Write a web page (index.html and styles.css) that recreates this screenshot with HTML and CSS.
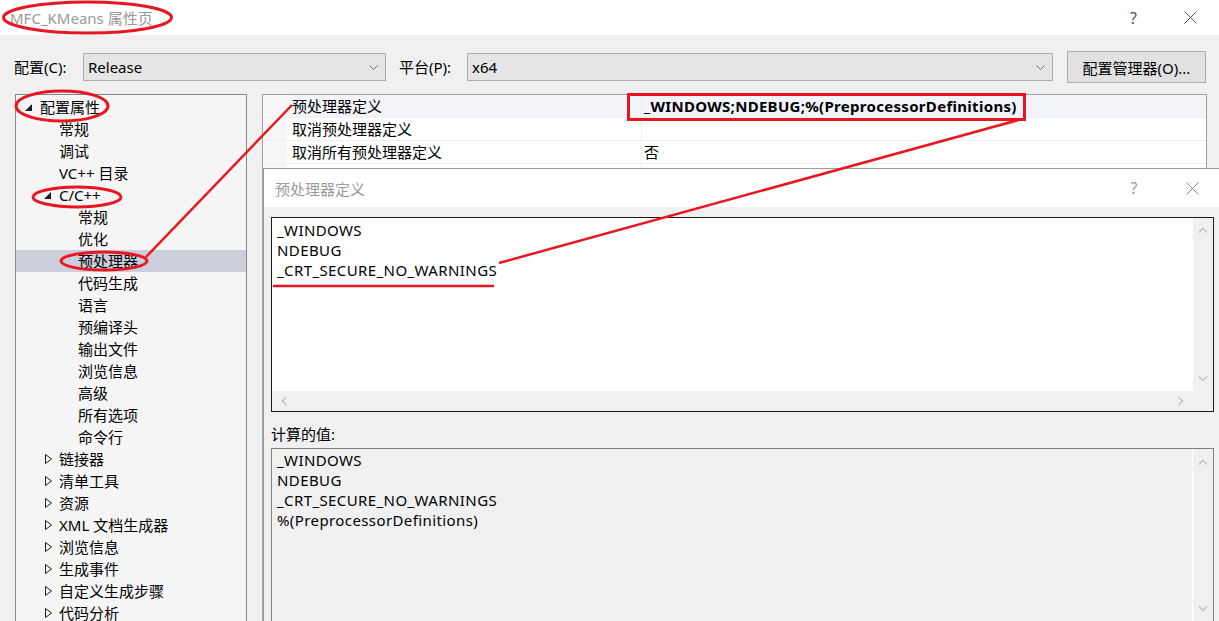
FILE: index.html
```html
<!DOCTYPE html>
<html lang="zh-CN">
<head>
    <meta charset="UTF-8">
    <meta name="viewport" content="width=device-width, initial-scale=1.0">
    <title>MFC_KMeans 属性页</title>
    <link rel="stylesheet" href="styles.css">
</head>
<body>

<div class="window">

    <div class="titlebar">
        <span class="title">MFC_KMeans 属性页</span>
        <span class="caption-btn help">?</span>
        <span class="caption-btn">
            <svg width="13" height="13" viewBox="0 0 13 13"><path d="M0.5 0.5 L12.5 12.5 M12.5 0.5 L0.5 12.5" stroke="#555" stroke-width="1" fill="none"/></svg>
        </span>
    </div>

    <div class="toolbar">
        <span class="field-label label-config">配置(C):</span>
        <div class="combo combo-config">
            <span>Release</span>
            <svg width="9" height="5" viewBox="0 0 9 5"><path d="M0.5 0.5 L4.5 4.5 L8.5 0.5" stroke="#707070" fill="none"/></svg>
        </div>
        <span class="field-label label-platform">平台(P):</span>
        <div class="combo combo-platform">
            <span>x64</span>
            <svg width="9" height="5" viewBox="0 0 9 5"><path d="M0.5 0.5 L4.5 4.5 L8.5 0.5" stroke="#707070" fill="none"/></svg>
        </div>
        <button class="btn">配置管理器(O)...</button>
    </div>

    <div class="main">
        <ul class="tree">
            <li class="lv0"><span class="twisty"><svg class="open" width="7" height="7" viewBox="0 0 7 7"><path d="M7 0 L7 7 L0 7 Z" fill="#1e1e1e"/></svg></span>配置属性</li>
            <li class="lv1"><span class="twisty"></span>常规</li>
            <li class="lv1"><span class="twisty"></span>调试</li>
            <li class="lv1"><span class="twisty"></span>VC++ 目录</li>
            <li class="lv1"><span class="twisty"><svg class="open" width="7" height="7" viewBox="0 0 7 7"><path d="M7 0 L7 7 L0 7 Z" fill="#1e1e1e"/></svg></span>C/C++</li>
            <li class="lv2"><span class="twisty"></span>常规</li>
            <li class="lv2"><span class="twisty"></span>优化</li>
            <li class="lv2 selected"><span class="twisty"></span>预处理器</li>
            <li class="lv2"><span class="twisty"></span>代码生成</li>
            <li class="lv2"><span class="twisty"></span>语言</li>
            <li class="lv2"><span class="twisty"></span>预编译头</li>
            <li class="lv2"><span class="twisty"></span>输出文件</li>
            <li class="lv2"><span class="twisty"></span>浏览信息</li>
            <li class="lv2"><span class="twisty"></span>高级</li>
            <li class="lv2"><span class="twisty"></span>所有选项</li>
            <li class="lv2"><span class="twisty"></span>命令行</li>
            <li class="lv1"><span class="twisty"><svg class="closed" width="7" height="10" viewBox="0 0 7 10"><path d="M0.5 0.5 L6.5 5 L0.5 9.5 Z" stroke="#1e1e1e" fill="none"/></svg></span>链接器</li>
            <li class="lv1"><span class="twisty"><svg class="closed" width="7" height="10" viewBox="0 0 7 10"><path d="M0.5 0.5 L6.5 5 L0.5 9.5 Z" stroke="#1e1e1e" fill="none"/></svg></span>清单工具</li>
            <li class="lv1"><span class="twisty"><svg class="closed" width="7" height="10" viewBox="0 0 7 10"><path d="M0.5 0.5 L6.5 5 L0.5 9.5 Z" stroke="#1e1e1e" fill="none"/></svg></span>资源</li>
            <li class="lv1"><span class="twisty"><svg class="closed" width="7" height="10" viewBox="0 0 7 10"><path d="M0.5 0.5 L6.5 5 L0.5 9.5 Z" stroke="#1e1e1e" fill="none"/></svg></span>XML 文档生成器</li>
            <li class="lv1"><span class="twisty"><svg class="closed" width="7" height="10" viewBox="0 0 7 10"><path d="M0.5 0.5 L6.5 5 L0.5 9.5 Z" stroke="#1e1e1e" fill="none"/></svg></span>浏览信息</li>
            <li class="lv1"><span class="twisty"><svg class="closed" width="7" height="10" viewBox="0 0 7 10"><path d="M0.5 0.5 L6.5 5 L0.5 9.5 Z" stroke="#1e1e1e" fill="none"/></svg></span>生成事件</li>
            <li class="lv1"><span class="twisty"><svg class="closed" width="7" height="10" viewBox="0 0 7 10"><path d="M0.5 0.5 L6.5 5 L0.5 9.5 Z" stroke="#1e1e1e" fill="none"/></svg></span>自定义生成步骤</li>
            <li class="lv1"><span class="twisty"><svg class="closed" width="7" height="10" viewBox="0 0 7 10"><path d="M0.5 0.5 L6.5 5 L0.5 9.5 Z" stroke="#1e1e1e" fill="none"/></svg></span>代码分析</li>
        </ul>

        <div class="grid">
            <div class="grid-row current">
                <div class="grid-gutter"></div>
                <div class="grid-name">预处理器定义</div>
                <div class="grid-value strong">_WINDOWS;NDEBUG;%(PreprocessorDefinitions)</div>
            </div>
            <div class="grid-row">
                <div class="grid-gutter"></div>
                <div class="grid-name">取消预处理器定义</div>
                <div class="grid-value"></div>
            </div>
            <div class="grid-row">
                <div class="grid-gutter"></div>
                <div class="grid-name">取消所有预处理器定义</div>
                <div class="grid-value">否</div>
            </div>
            <div class="grid-row">
                <div class="grid-gutter"></div>
                <div class="grid-name">&nbsp;</div>
                <div class="grid-value"></div>
            </div>
        </div>
    </div>

    <!-- edit dialog on top of the property page -->
    <div class="dialog">
        <div class="dialog-title">
            <span class="title">预处理器定义</span>
            <span class="caption-btn help">?</span>
            <span class="caption-btn">
                <svg width="13" height="13" viewBox="0 0 13 13"><path d="M0.5 0.5 L12.5 12.5 M12.5 0.5 L0.5 12.5" stroke="#8a8a8a" stroke-width="1" fill="none"/></svg>
            </span>
        </div>
        <div class="dialog-body">
            <div class="editor">
                <div class="editor-text">
                    <div>_WINDOWS</div>
                    <div>NDEBUG</div>
                    <div>_CRT_SECURE_NO_WARNINGS</div>
                </div>
                <div class="vscroll">
                    <svg width="10" height="6" viewBox="0 0 10 6"><path d="M1 5.5 L5 1.5 L9 5.5" stroke="#c2c2c2" stroke-width="1.5" fill="none"/></svg>
                    <svg width="10" height="6" viewBox="0 0 10 6"><path d="M1 0.5 L5 4.5 L9 0.5" stroke="#c2c2c2" stroke-width="1.5" fill="none"/></svg>
                </div>
                <div class="hscroll">
                    <svg width="6" height="10" viewBox="0 0 6 10"><path d="M5.5 1 L1.5 5 L5.5 9" stroke="#c2c2c2" stroke-width="1.5" fill="none"/></svg>
                    <svg width="6" height="10" viewBox="0 0 6 10"><path d="M0.5 1 L4.5 5 L0.5 9" stroke="#c2c2c2" stroke-width="1.5" fill="none"/></svg>
                </div>
                <div class="corner"></div>
            </div>

            <div class="computed-label">计算的值:</div>
            <div class="computed">
                <div class="computed-text">
                    <div>_WINDOWS</div>
                    <div>NDEBUG</div>
                    <div>_CRT_SECURE_NO_WARNINGS</div>
                    <div>%(PreprocessorDefinitions)</div>
                </div>
                <div class="vscroll computed-scroll">
                    <svg width="10" height="6" viewBox="0 0 10 6"><path d="M1 5.5 L5 1.5 L9 5.5" stroke="#c2c2c2" stroke-width="1.5" fill="none"/></svg>
                    <svg width="10" height="6" viewBox="0 0 10 6"><path d="M1 0.5 L5 4.5 L9 0.5" stroke="#c2c2c2" stroke-width="1.5" fill="none"/></svg>
                </div>
            </div>
        </div>
    </div>

    <!-- red hand-drawn marks -->
    <svg class="marks" width="1219" height="621" viewBox="0 0 1219 621">
        <g fill="none" stroke="#e8171f" stroke-width="3">
            <ellipse cx="87.5" cy="17.5" rx="84" ry="15.5"/>
            <ellipse cx="62" cy="106" rx="46" ry="15"/>
            <ellipse cx="77" cy="197" rx="44" ry="10"/>
            <ellipse cx="104" cy="261" rx="43" ry="9"/>
            <rect x="628.5" y="94.5" width="396" height="25"/>
            <line x1="146" y1="257" x2="292" y2="105" stroke-width="2.5"/>
            <line x1="1022" y1="119" x2="499" y2="263" stroke-width="2.5"/>
            <line x1="273" y1="286" x2="494" y2="286" stroke-width="2.5"/>
        </g>
    </svg>

</div>

</body>
</html>
```

FILE: styles.css
```css
* {
    box-sizing: border-box;
}

html, body {
    margin: 0;
    padding: 0;
}

body {
    font-family: "Noto Sans", "Noto Sans CJK SC", sans-serif;
    font-size: 15px;
    color: #000;
    background-color: #f0f0f0;
    overflow: hidden;
}

.window {
    position: relative;
    width: 1219px;
    height: 621px;
    overflow: hidden;
}

/* title bar */
.titlebar {
    height: 35px;
    background-color: #fff;
    display: flex;
    align-items: center;
    padding-left: 10px;
}

.titlebar .title {
    flex: 1;
    color: #9a9a9a;
}

.caption-btn {
    width: 57px;
    height: 100%;
    display: flex;
    align-items: center;
    justify-content: center;
}

.caption-btn.help {
    color: #555;
    font-size: 16px;
}

/* config row */
.toolbar {
    display: flex;
    align-items: center;
    height: 32px;
    margin-top: 16px;
    padding-left: 14px;
}

.field-label {
    line-height: 20px;
}

.label-config {
    width: 69px;
}

.label-platform {
    width: 68px;
    margin-left: 13px;
}

.combo {
    height: 28px;
    border: 1px solid #adadad;
    background-color: #e5e5e5;
    display: flex;
    align-items: center;
    justify-content: space-between;
    padding: 0 7px 0 4px;
}

.combo-config {
    width: 303px;
}

.combo-platform {
    width: 586px;
}

.btn {
    width: 139px;
    height: 32px;
    margin-left: 14px;
    border: 1px solid #adadad;
    background-color: #e1e1e1;
    font-family: inherit;
    font-size: 15px;
    color: #000;
    padding: 0;
}

/* left tree + property grid */
.main {
    display: flex;
    gap: 15px;
    margin-top: 11px;
    padding-left: 15px;
}

.tree {
    list-style: none;
    margin: 0;
    padding: 1px 0 0;
    width: 232px;
    height: 560px;
    border: 1px solid #828790;
    background-color: #f5f5f5;
    flex: none;
}

.tree li {
    display: flex;
    align-items: center;
    height: 22px;
    white-space: nowrap;
    line-height: 22px;
}

.tree .lv0 {
    padding-left: 8px;
}

.tree .lv1 {
    padding-left: 27px;
}

.tree .lv2 {
    padding-left: 46px;
}

.tree li.selected {
    background-color: #cccedb;
}

.twisty {
    width: 16px;
    flex: none;
    display: flex;
    align-items: center;
}

.twisty .open {
    margin-left: 1px;
    margin-top: 1px;
}

.twisty .closed {
    margin-left: 2px;
}

.grid {
    width: 945px;
    height: 560px;
    border: 1px solid #a0a0a0;
    background-color: #fff;
    flex: none;
}

.grid-row {
    display: flex;
    height: 23px;
    border-bottom: 1px solid #eeeff3;
}

.grid-gutter {
    width: 24px;
    background-color: #f7f7f9;
}

.grid-name {
    width: 355px;
    padding-left: 5px;
    line-height: 22px;
    border-right: 1px solid #eeeff3;
}

.grid-value {
    flex: 1;
    padding-left: 2px;
    line-height: 22px;
}

.grid-row.current .grid-name,
.grid-row.current .grid-value {
    background-color: #f2f4f9;
}

.strong {
    font-weight: 700;
    letter-spacing: 0.3px;
}

/* dialog */
.dialog {
    position: absolute;
    left: 263px;
    top: 168px;
    right: -3px;
    bottom: -20px;
    border: 1px solid #9b9b9b;
    background-color: #f0f0f0;
}

.dialog-title {
    height: 38px;
    background-color: #fff;
    display: flex;
    align-items: center;
    padding-left: 11px;
}

.dialog-title .title {
    flex: 1;
    color: #9a9a9a;
}

.dialog-title .caption-btn {
    width: 58px;
}

.dialog-title .caption-btn.help {
    color: #9a9a9a;
}

.dialog-body {
    padding: 10px 0 0 7px;
}

.editor {
    width: 943px;
    height: 195px;
    border: 1px solid #1a1a1a;
    display: grid;
    grid-template-columns: 1fr 20px;
    grid-template-rows: 1fr 20px;
    background-color: #f0f0f0;
}

.editor-text {
    background-color: #fff;
    padding: 2px 5px;
    line-height: 20px;
    letter-spacing: 0.4px;
}

.vscroll {
    display: flex;
    flex-direction: column;
    justify-content: space-between;
    align-items: center;
    padding: 9px 0 9px;
}

.hscroll {
    display: flex;
    justify-content: space-between;
    align-items: center;
    padding: 0 9px 0 9px;
}

.computed-label {
    margin: 12px 0 4px;
    line-height: 20px;
}

.computed {
    width: 943px;
    height: 190px;
    border: 1px solid #828282;
    display: grid;
    grid-template-columns: 1fr 20px;
}

.computed-text {
    padding: 1px 5px;
    line-height: 20px;
    letter-spacing: 0.4px;
    border-right: 1px solid #fff;
}

.computed-scroll {
    padding: 10px 0 0;
    justify-content: flex-start;
    gap: 141px;
}

/* annotations */
.marks {
    position: absolute;
    left: 0;
    top: 0;
    pointer-events: none;
}
```
